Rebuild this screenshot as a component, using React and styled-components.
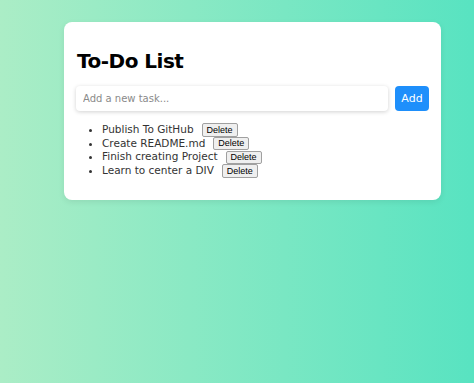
import React, { useState } from "react";
import styled, { createGlobalStyle } from "styled-components";

const GlobalStyle = createGlobalStyle`
  html, body {
    margin: 0;
    padding: 0;
  }
  body {
    min-height: 383px;
    background: linear-gradient(to right, #abedc6, #58e3c1);
    font-family: "DejaVu Sans", "Noto Sans", sans-serif;
  }
`;

const Page = styled.div`
  padding: 22px 0 0 64px;
`;

const Card = styled.div`
  width: 377px;
  box-sizing: border-box;
  background: #fff;
  border-radius: 8px;
  box-shadow: 0 2px 6px rgba(0, 0, 0, 0.08);
  padding: 27px 12px 22px 12px;
`;

const Title = styled.h1`
  margin: 0 0 13px 1px;
  font-size: 20px;
  font-weight: bold;
  color: #000;
  letter-spacing: -0.5px;
`;

const InputRow = styled.div`
  display: flex;
  align-items: center;
  gap: 7px;
`;

const TaskInput = styled.input`
  flex: 1;
  height: 25px;
  box-sizing: border-box;
  border: none;
  border-radius: 4px;
  box-shadow: 0 1px 4px rgba(0, 0, 0, 0.18);
  padding: 0 7px;
  font-family: inherit;
  font-size: 10px;
  color: #333;
  outline: none;
  &::placeholder {
    color: #8a8a8a;
  }
`;

const AddButton = styled.button`
  height: 25px;
  width: 34px;
  padding: 0;
  border: none;
  border-radius: 4px;
  background: #1e8ffb;
  color: #fff;
  font-family: inherit;
  font-size: 11px;
  cursor: pointer;
`;

const TaskList = styled.ul`
  margin: 12px 0 0 0;
  padding-left: 26px;
  font-size: 10.5px;
  color: #333;
`;

const TaskItem = styled.li`
  line-height: 13.5px;
  height: 13.7px;
`;

const DeleteButton = styled.button`
  margin-left: 8px;
  padding: 0 4px;
  height: 13.5px;
  font-family: "Liberation Sans", Arial, sans-serif;
  font-size: 9px;
  line-height: 11px;
  color: #000;
  background: #efefef;
  border: 1px solid #a0a0a0;
  border-radius: 2px;
  vertical-align: middle;
`;

export default function App() {
  const [tasks, setTasks] = useState([
    "Publish To GitHub",
    "Create README.md",
    "Finish creating Project",
    "Learn to center a DIV",
  ]);
  const [text, setText] = useState("");

  const addTask = () => {
    if (!text.trim()) return;
    setTasks([...tasks, text.trim()]);
    setText("");
  };

  return (
    <Page>
      <GlobalStyle />
      <Card>
        <Title>To-Do List</Title>
        <InputRow>
          <TaskInput
            placeholder="Add a new task..."
            value={text}
            onChange={(e) => setText(e.target.value)}
          />
          <AddButton onClick={addTask}>Add</AddButton>
        </InputRow>
        <TaskList>
          {tasks.map((t, i) => (
            <TaskItem key={i}>
              {t}
              <DeleteButton onClick={() => setTasks(tasks.filter((_, j) => j !== i))}>
                Delete
              </DeleteButton>
            </TaskItem>
          ))}
        </TaskList>
      </Card>
    </Page>
  );
}
